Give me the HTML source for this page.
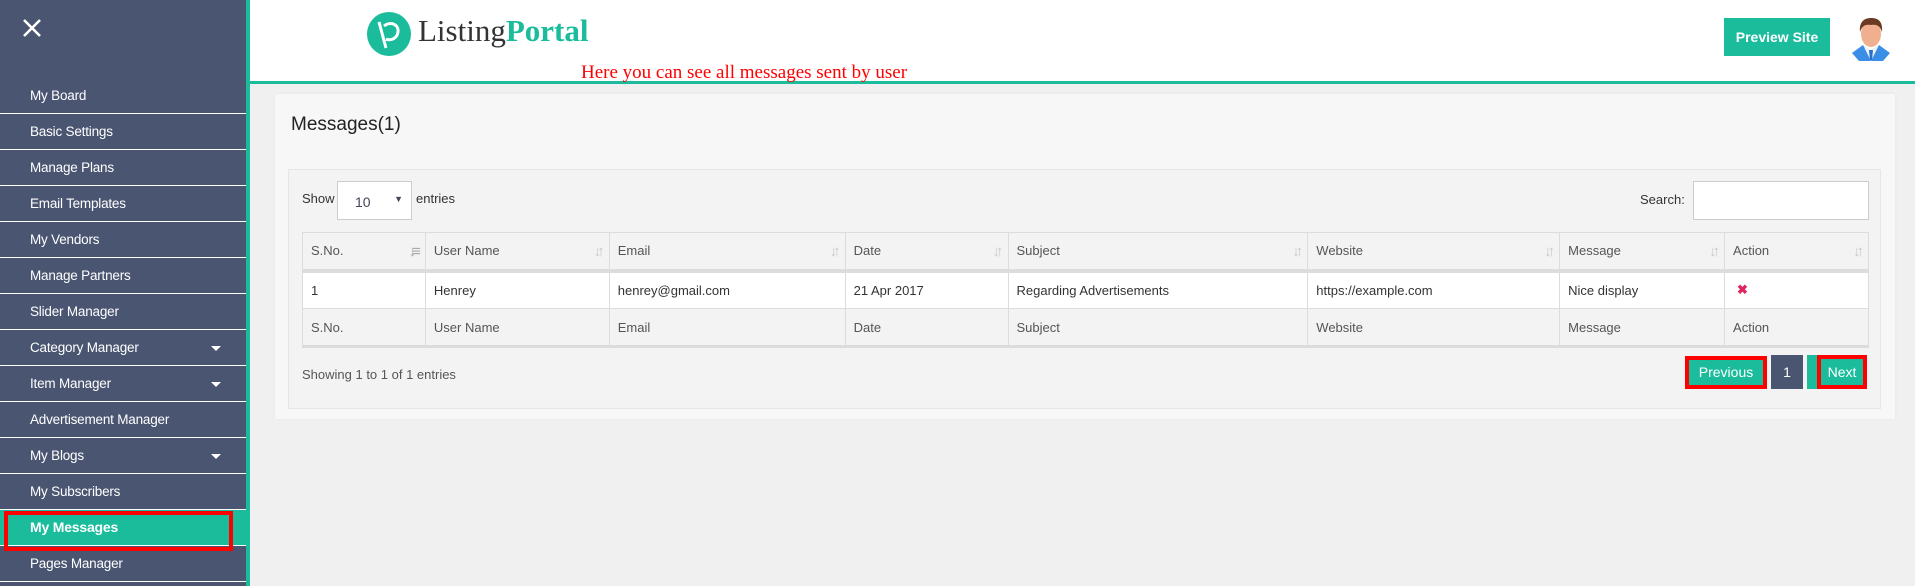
<!DOCTYPE html>
<html><head><meta charset="utf-8"><style>
*{box-sizing:border-box;margin:0;padding:0}
body{width:1915px;height:586px;overflow:hidden;background:#f0f0f0;font-family:"Liberation Sans",sans-serif;position:relative}
.side{position:absolute;left:0;top:0;width:246px;height:586px;background:#4a5571}
.sbord{position:absolute;left:246px;top:0;width:4px;height:586px;background:#1abc9c}
.item{position:absolute;left:0;width:246px;height:36px;border-bottom:1.5px solid #fff;color:#fff;font-size:13.5px;line-height:35px;padding-left:30px;letter-spacing:-0.2px}
.caret{position:absolute;left:211px;top:16px;border-left:5px solid transparent;border-right:5px solid transparent;border-top:5px solid #fff}
.hdr{position:absolute;left:250px;top:0;width:1665px;height:81px;background:#fff}
.hline{position:absolute;left:250px;top:81px;width:1665px;height:3px;background:#1abc9c}
.card{position:absolute;left:275px;top:94px;width:1620px;height:325px;background:#f7f7f7;box-shadow:0 0 2px #e4e4e4}
.panel{position:absolute;left:288px;top:169px;width:1593px;height:240px;background:#f3f3f3;border:1px solid #e6e6e6}
table{position:absolute;left:302px;top:232px;width:1567px;border-collapse:collapse;font-size:13px}
td{border:1px solid #dcdcdc;padding:0 8px;height:38px;color:#333;position:relative}
tr.h td{color:#555;background:#f3f3f3}
tr.h1 td{border-bottom:4px solid #dcdcdc}
tr.b td{background:#fff}
tr.f td{border-bottom:3px solid #dcdcdc}
.s{position:absolute;right:8px;top:10px;color:#c8c8c8;font-size:15px;font-weight:bold;letter-spacing:-4px}
</style></head><body>
<div class="side">
<svg style="position:absolute;left:22px;top:18px" width="20" height="20"><path d="M2 2L18 18M18 2L2 18" stroke="#fff" stroke-width="2.6"/></svg>
<div class="item" style="top:78px">My Board</div>
<div class="item" style="top:114px">Basic Settings</div>
<div class="item" style="top:150px">Manage Plans</div>
<div class="item" style="top:186px">Email Templates</div>
<div class="item" style="top:222px">My Vendors</div>
<div class="item" style="top:258px">Manage Partners</div>
<div class="item" style="top:294px">Slider Manager</div>
<div class="item" style="top:330px">Category Manager<span class="caret"></span></div>
<div class="item" style="top:366px">Item Manager<span class="caret"></span></div>
<div class="item" style="top:402px">Advertisement Manager</div>
<div class="item" style="top:438px">My Blogs<span class="caret"></span></div>
<div class="item" style="top:474px">My Subscribers</div>
<div class="item" style="top:510px;background:#1abc9c;font-weight:bold;font-size:14px">My Messages</div>
<div class="item" style="top:546px">Pages Manager</div>
<div style="position:absolute;left:4px;top:511px;width:229px;height:40px;border:4px solid #f00"></div>
</div>
<div class="sbord"></div>
<div class="hdr">
<svg style="position:absolute;left:116px;top:11px" width="46" height="46" viewBox="0 0 46 46"><circle cx="23" cy="23" r="22" fill="#1abc9c"/><path d="M13 11L20 37M18 15C24 10 33 13 32 21C31 28 24 30 20 28" stroke="#fff" stroke-width="3" fill="none"/></svg>
<div style="position:absolute;left:168px;top:13px;font-family:'Liberation Serif',serif;font-size:31px;color:#333">Listing<span style="color:#1abc9c;font-weight:bold">Portal</span></div>
<div style="position:absolute;left:1724px;top:18px;width:106px;height:38px;background:#1abc9c;color:#fff;font-size:14px;font-weight:bold;text-align:center;line-height:38px;margin-left:-250px">Preview Site</div>
<svg style="position:absolute;left:1601px;top:17px" width="40" height="45" viewBox="0 0 40 45"><path d="M1 36L12 28L20 34L28 28L39 36L32 44H8Z" fill="#3a8ee6"/><path d="M12 28L20 44L28 28L20 34Z" fill="#eef4fb"/><path d="M18 33h4l-1 10h-2Z" fill="#2a6fc8"/><ellipse cx="20" cy="17" rx="10" ry="13" fill="#f0b090"/><path d="M9 15C8 4 14 1 20 1C27 1 32 4 31 15C29 9 26 7 20 8C14 7 11 9 9 15Z" fill="#6b3a22"/></svg>
</div>
<div style="position:absolute;left:581px;top:62px;font-family:'Liberation Serif',serif;font-size:19px;color:#f00;z-index:3">Here you can see all messages sent by user</div>
<div class="hline"></div>
<div class="card"></div>
<div style="position:absolute;left:291px;top:114px;font-size:19px;color:#222">Messages(1)</div>
<div class="panel"></div>
<div style="position:absolute;left:302px;top:191px;font-size:13px;color:#333">Show</div>
<div style="position:absolute;left:337px;top:181px;width:75px;height:39px;background:#fff;border:1px solid #ccc;font-size:14px;color:#445;padding:12px 0 0 17px">10<span style="position:absolute;right:8px;top:12px;font-size:9px">▼</span></div>
<div style="position:absolute;left:416px;top:191px;font-size:13px;color:#333">entries</div>
<div style="position:absolute;left:1640px;top:192px;font-size:13px;color:#333">Search:</div>
<div style="position:absolute;left:1693px;top:181px;width:176px;height:39px;background:#fff;border:1px solid #ccc"></div>
<table>
<colgroup><col style="width:123px"><col style="width:184px"><col style="width:236px"><col style="width:163px"><col style="width:300px"><col style="width:252px"><col style="width:165px"><col style="width:144px"></colgroup>
<tr class="h h1"><td>S.No.<span class="s" style="color:#aaa">↓≡</span></td><td>User Name<span class="s">↓↑</span></td><td>Email<span class="s">↓↑</span></td><td>Date<span class="s">↓↑</span></td><td>Subject<span class="s">↓↑</span></td><td>Website<span class="s">↓↑</span></td><td>Message<span class="s">↓↑</span></td><td>Action<span class="s">↓↑</span></td></tr>
<tr class="b"><td>1</td><td>Henrey</td><td>henrey@gmail.com</td><td>21 Apr 2017</td><td>Regarding Advertisements</td><td>https://example.com</td><td>Nice display</td><td><span style="color:#e0245e;font-weight:bold;padding-left:4px">✖</span></td></tr>
<tr class="h f"><td>S.No.</td><td>User Name</td><td>Email</td><td>Date</td><td>Subject</td><td>Website</td><td>Message</td><td>Action</td></tr>
</table>
<div style="position:absolute;left:302px;top:367px;font-size:13px;color:#555">Showing 1 to 1 of 1 entries</div>
<div style="position:absolute;left:1685px;top:356px;width:82px;height:33px;background:#1abc9c;border:4px solid #f00;color:#fff;font-size:14px;text-align:center;line-height:25px">Previous</div>
<div style="position:absolute;left:1771px;top:355px;width:32px;height:34px;background:#4a5571;color:#fff;font-size:14px;text-align:center;line-height:34px">1</div>
<div style="position:absolute;left:1807px;top:355px;width:56px;height:34px;background:#1abc9c"></div>
<div style="position:absolute;left:1817px;top:355px;width:50px;height:34px;border:4px solid #f00;color:#fff;font-size:14px;text-align:center;line-height:26px">Next</div>
</body></html>
